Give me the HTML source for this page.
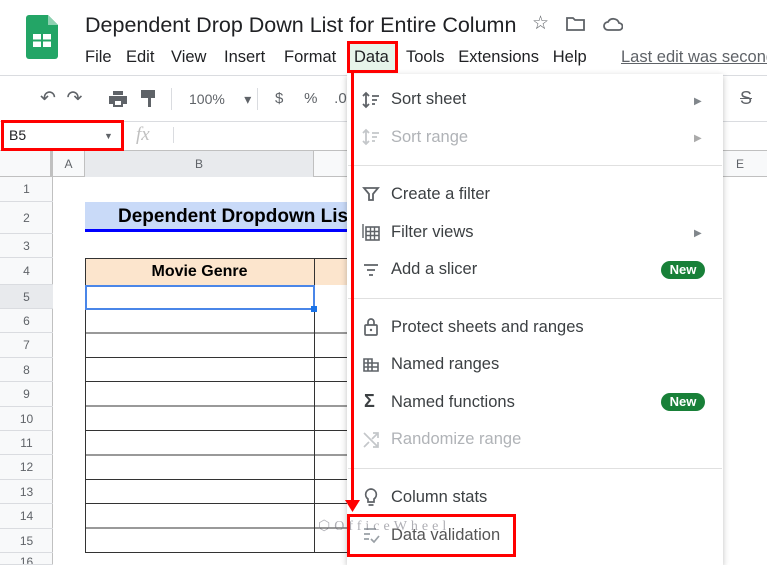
<!DOCTYPE html>
<html><head><style>
*{margin:0;padding:0;box-sizing:border-box}
html,body{width:767px;height:565px;overflow:hidden;background:#fff}
#w{position:relative;width:767px;height:565px;overflow:hidden;font-family:"Liberation Sans",Arial,sans-serif;color:#3c4043}
.a{position:absolute}
.rn{position:absolute;left:0;width:53px;text-align:center;font-size:12px;color:#5f6368;border-bottom:1px solid #dadce0}
.mi{position:absolute;left:391px;font-size:16.5px;color:#3c4043;white-space:nowrap}
.ic{position:absolute;left:362px;width:18px;height:18px}
.dis{color:#b0b3b7}
.arr{position:absolute;left:694px;font-size:10px;color:#80868b}
.new{position:absolute;left:661px;width:44px;height:18px;border-radius:9px;background:#188038;color:#fff;font-size:13px;font-weight:bold;text-align:center;line-height:18px}
.sep{position:absolute;left:348px;width:374px;height:1px;background:#e0e0e0}
</style></head><body><div id="w">
<svg class="a" style="left:26px;top:15px" width="32" height="44" viewBox="0 0 32 44"><path d="M3 0h19l10 10v31a3 3 0 0 1-3 3H3a3 3 0 0 1-3-3V3a3 3 0 0 1 3-3z" fill="#23a566"/><path d="M22 0l10 10H22z" fill="#8ed1b1"/><rect x="7" y="19" width="18" height="13" fill="#fff"/><rect x="15" y="19" width="2" height="13" fill="#23a566"/><rect x="7" y="24.5" width="18" height="2" fill="#23a566"/></svg>
<div class="a" style="left:85px;top:13px;font-size:21.5px;color:#202124;white-space:nowrap">Dependent Drop Down List for Entire Column</div>
<div class="a" style="left:532px;top:12px;font-size:19px;color:#5f6368">☆</div>
<svg class="a" style="left:566px;top:16px" width="20" height="16"><path d="M1 2h6l2 2h9v10H1z" fill="none" stroke="#5f6368" stroke-width="1.8"/></svg>
<svg class="a" style="left:603px;top:17px" width="20" height="14"><path d="M5 13a4 4 0 0 1 0-8 6 6 0 0 1 11 1 3.5 3.5 0 0 1 0 7z" fill="none" stroke="#5f6368" stroke-width="1.8"/></svg>
<div class="a" style="left:85px;top:48px;font-size:16.5px;color:#202124;white-space:nowrap">File</div>
<div class="a" style="left:126px;top:48px;font-size:16.5px;color:#202124">Edit</div>
<div class="a" style="left:171px;top:48px;font-size:16.5px;color:#202124">View</div>
<div class="a" style="left:224px;top:48px;font-size:16.5px;color:#202124">Insert</div>
<div class="a" style="left:284px;top:48px;font-size:16.5px;color:#202124">Format</div>
<div class="a" style="left:349px;top:43px;width:47px;height:28px;background:#e6f4ea"></div>
<div class="a" style="left:354px;top:48px;font-size:16.5px;color:#202124">Data</div>
<div class="a" style="left:406px;top:48px;font-size:16.5px;color:#202124;white-space:nowrap">Tools&nbsp;&nbsp; Extensions&nbsp;&nbsp; Help</div>
<div class="a" style="left:621px;top:48px;font-size:16.5px;color:#5f6368;text-decoration:underline;white-space:nowrap">Last edit was seconds</div>
<div class="a" style="left:0;top:75px;width:767px;height:1px;background:#dadce0"></div>
<div class="a" style="left:40px;top:87px;font-size:19px;color:#5f6368;white-space:nowrap">↶&nbsp; ↷</div>
<svg class="a" style="left:108px;top:90px" width="20" height="18"><path d="M5 1h10v4H5zM1 6h18v8h-4v3H5v-3H1z" fill="#5f6368"/><rect x="7" y="11" width="6" height="4" fill="#fff"/></svg>
<div class="a" style="left:141px;top:90px;width:14px;height:8px;background:#5f6368"></div><div class="a" style="left:148px;top:98px;width:3px;height:9px;background:#5f6368"></div>
<div class="a" style="left:171px;top:88px;width:1px;height:22px;background:#dadce0"></div>
<div class="a" style="left:189px;top:91px;font-size:14px;color:#5f6368;white-space:nowrap">100%&nbsp;&nbsp;&nbsp;&nbsp; ▾</div>
<div class="a" style="left:257px;top:88px;width:1px;height:22px;background:#dadce0"></div>
<div class="a" style="left:275px;top:90px;font-size:15px;color:#5f6368;white-space:nowrap">$&nbsp;&nbsp;&nbsp;&nbsp;&nbsp;%&nbsp;&nbsp;&nbsp;&nbsp;.0</div>
<div class="a" style="left:740px;top:88px;font-size:18px;color:#5f6368;text-decoration:line-through">S</div>
<div class="a" style="left:0;top:121px;width:767px;height:1px;background:#dadce0"></div>
<div class="a" style="left:9px;top:127px;font-size:14px;color:#202124">B5</div>
<div class="a" style="left:104px;top:131px;font-size:9px;color:#5f6368">▼</div>
<div class="a" style="left:136px;top:124px;font-size:19px;font-style:italic;color:#c0c0c0;font-family:'Liberation Serif',serif">fx</div>
<div class="a" style="left:173px;top:127px;width:1px;height:16px;background:#dadce0"></div>
<div class="a" style="left:0;top:150px;width:767px;height:1px;background:#c0c0c0"></div>
<div class="a" style="left:0;top:151px;width:767px;height:26px;background:#f8f9fa;border-bottom:1px solid #c0c0c0"></div>
<div class="a" style="left:50px;top:151px;width:3px;height:26px;background:#c0c0c0"></div>
<div class="a" style="left:53px;top:151px;width:32px;height:26px;text-align:center;line-height:26px;font-size:12px;color:#5f6368;border-right:1px solid #c0c0c0">A</div>
<div class="a" style="left:85px;top:151px;width:229px;height:26px;text-align:center;line-height:26px;font-size:12px;color:#5f6368;background:#e8eaed;border-right:1px solid #c0c0c0">B</div>
<div class="a" style="left:728px;top:151px;width:24px;height:26px;text-align:center;line-height:26px;font-size:12px;color:#5f6368">E</div>
<div class="a" style="left:0;top:177px;width:53px;height:388px;background:#f8f9fa;border-right:1px solid #c0c0c0"></div>
<div class="rn" style="top:177px;height:25px;line-height:25px">1</div>
<div class="rn" style="top:202px;height:32px;line-height:32px">2</div>
<div class="rn" style="top:234px;height:24px;line-height:24px">3</div>
<div class="rn" style="top:258px;height:27px;line-height:27px">4</div>
<div class="rn" style="top:285px;height:24px;line-height:24px;background:#e8eaed">5</div>
<div class="rn" style="top:309px;height:24.4px;line-height:24px">6</div>
<div class="rn" style="top:333.4px;height:24.4px;line-height:24px">7</div>
<div class="rn" style="top:357.8px;height:24.4px;line-height:24px">8</div>
<div class="rn" style="top:382.2px;height:24.4px;line-height:24px">9</div>
<div class="rn" style="top:406.6px;height:24.4px;line-height:24px">10</div>
<div class="rn" style="top:431px;height:24.4px;line-height:24px">11</div>
<div class="rn" style="top:455.4px;height:24.4px;line-height:24px">12</div>
<div class="rn" style="top:479.8px;height:24.4px;line-height:24px">13</div>
<div class="rn" style="top:504.2px;height:24.4px;line-height:24px">14</div>
<div class="rn" style="top:528.6px;height:24.4px;line-height:24px">15</div>
<div class="rn" style="top:553px;height:12px;line-height:18px;overflow:hidden">16</div>
<div class="a" style="left:85px;top:202px;width:262px;height:30px;background:#c9daf8;border-bottom:3px solid #0000ff"></div>
<div class="a" style="left:118px;top:206px;font-size:19px;font-weight:bold;color:#000;white-space:nowrap;width:229px;overflow:hidden">Dependent Dropdown List</div>
<div class="a" style="left:85px;top:258px;width:262px;height:27px;background:#fce5cd;border-top:1px solid #333"></div>
<div class="a" style="left:85px;top:263px;width:229px;text-align:center;font-size:16px;font-weight:bold;color:#000">Movie Genre</div>
<div class="a" style="left:85px;top:258px;width:1px;height:295px;background:#333"></div>
<div class="a" style="left:314px;top:258px;width:1px;height:295px;background:#333"></div>
<div class="a" style="left:85px;top:309px;width:262px;height:244px;background:repeating-linear-gradient(to bottom,transparent 0,transparent 23.4px,#333 23.4px,#333 24.4px)"></div>
<div class="a" style="left:85px;top:285px;width:230px;height:25px;border:2px solid #4a86e8"></div>
<div class="a" style="left:311px;top:306px;width:6px;height:6px;background:#1a73e8"></div>
<div class="a" style="left:347px;top:74px;width:376px;height:491px;background:#fff;box-shadow:0 2px 6px rgba(0,0,0,.25)"></div>
<svg class="ic" style="top:91px" viewBox="0 0 18 18"><path d="M4 2v14M1 5l3-3 3 3M1 13l3 3 3-3M10 5h7M10 9h5M10 13h3" stroke="#5f6368" stroke-width="1.8" fill="none"/></svg>
<div class="mi" style="top:90px">Sort sheet</div><div class="arr" style="top:96px">▶</div>
<svg class="ic" style="top:128px" viewBox="0 0 18 18"><path d="M4 2v14M1 5l3-3 3 3M1 13l3 3 3-3M10 5h7M10 9h5M10 13h3" stroke="#c4c7ca" stroke-width="1.8" fill="none"/></svg>
<div class="mi dis" style="top:128px">Sort range</div><div class="arr" style="top:133px;color:#aaa">▶</div>
<div class="sep" style="top:165px"></div>
<svg class="ic" style="top:185px" viewBox="0 0 18 18"><path d="M2 3h14l-5 6v6H7V9z" stroke="#5f6368" stroke-width="1.8" fill="none"/></svg>
<div class="mi" style="top:185px">Create a filter</div>
<svg class="ic" style="top:223px" viewBox="0 0 18 18"><rect x="4" y="4" width="13" height="13" stroke="#5f6368" stroke-width="1.6" fill="none"/><path d="M1 1v14M4 8.5h13M4 12.5h13M8.5 4v13M12.5 4v13" stroke="#5f6368" stroke-width="1.4"/></svg>
<div class="mi" style="top:223px">Filter views</div><div class="arr" style="top:228px">▶</div>
<svg class="ic" style="top:261px" viewBox="0 0 18 18"><path d="M2 4h14M5 9h8M7 14h4" stroke="#5f6368" stroke-width="1.8"/></svg>
<div class="mi" style="top:260px">Add a slicer</div><div class="new" style="top:261px">New</div>
<div class="sep" style="top:298px"></div>
<svg class="ic" style="top:318px" viewBox="0 0 18 18"><rect x="3" y="7" width="12" height="10" rx="1" stroke="#5f6368" stroke-width="1.7" fill="none"/><path d="M6 7V4a3 3 0 0 1 6 0v3" stroke="#5f6368" stroke-width="1.7" fill="none"/><circle cx="9" cy="12" r="1.2" fill="#5f6368"/></svg>
<div class="mi" style="top:318px">Protect sheets and ranges</div>
<svg class="ic" style="top:356px" viewBox="0 0 18 18"><path d="M2 3h8v12H2zM2 7h14v8H10M2 11h14M6 3v12" stroke="#5f6368" stroke-width="1.6" fill="none"/></svg>
<div class="mi" style="top:355px">Named ranges</div>
<div class="a" style="left:364px;top:391px;font-size:18px;font-weight:bold;color:#3c4043">Σ</div>
<div class="mi" style="top:393px">Named functions</div><div class="new" style="top:393px">New</div>
<svg class="ic" style="top:431px" viewBox="0 0 18 18"><path d="M2 2l14 14M11 16h5v-5M11 2h5v5M16 2L10 8M2 16l5-5" stroke="#c4c7ca" stroke-width="1.7" fill="none"/></svg>
<div class="mi dis" style="top:430px">Randomize range</div>
<div class="sep" style="top:468px"></div>
<svg class="ic" style="top:488px" viewBox="0 0 18 18"><path d="M9 1a5.5 5.5 0 0 0-3 10v3h6v-3A5.5 5.5 0 0 0 9 1zM6.5 17h5" stroke="#5f6368" stroke-width="1.7" fill="none"/></svg>
<div class="mi" style="top:488px">Column stats</div>
<svg class="ic" style="top:526px" viewBox="0 0 18 18"><path d="M2 3h12M2 8h6M2 13h5M9 13l3 3 5-6" stroke="#9aa0a6" stroke-width="1.7" fill="none"/></svg>
<div class="mi" style="top:526px;color:#555">Data validation</div>
<div class="a" style="left:318px;top:518px;font-size:14px;letter-spacing:4px;color:rgba(120,120,130,.6);font-family:'Liberation Serif',serif;white-space:nowrap">⬡OfficeWheel</div>
<div class="a" style="left:347px;top:41px;width:51px;height:32px;border:3px solid #f00"></div>
<div class="a" style="left:1px;top:120px;width:123px;height:31px;border:3px solid #f00"></div>
<div class="a" style="left:351px;top:73px;width:3px;height:430px;background:#f00"></div>
<svg class="a" style="left:345px;top:500px" width="15" height="12"><path d="M0 0h15L7.5 12z" fill="#f00"/></svg>
<div class="a" style="left:347px;top:514px;width:169px;height:43px;border:3px solid #f00"></div>
</div></body></html>
